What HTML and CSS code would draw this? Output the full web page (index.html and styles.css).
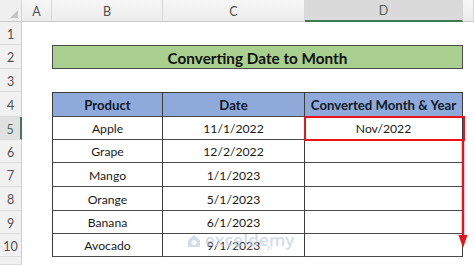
FILE: index.html
```html
<!DOCTYPE html>
<html>
<head>
<meta charset="utf-8">
<link rel="stylesheet" href="styles.css">
</head>
<body>
<div class="sheet">
  <div class="grid">
    <div class="corner"><span class="tri"></span></div>
    <div class="colhead">A</div>
    <div class="colhead">B</div>
    <div class="colhead">C</div>
    <div class="colhead sel">D</div>
    <div class="colhead"></div>

    <div class="rowhead">1</div>
    <div class="blank span5"></div>

    <div class="rowhead">2</div>
    <div class="blank"></div>
    <div class="banner">Converting Date to Month</div>
    <div class="blank"></div>

    <div class="rowhead">3</div>
    <div class="blank span5"></div>

    <div class="rowhead">4</div>
    <div class="blank"></div>
    <div class="th first">Product</div>
    <div class="th">Date</div>
    <div class="th">Converted Month &amp; Year</div>
    <div class="blank"></div>

    <div class="rowhead rsel">5</div>
    <div class="blank"></div>
    <div class="td first">Apple</div>
    <div class="td">11/1/2022</div>
    <div class="td">Nov/2022</div>
    <div class="blank"></div>

    <div class="rowhead">6</div>
    <div class="blank"></div>
    <div class="td first">Grape</div>
    <div class="td">12/2/2022</div>
    <div class="td"></div>
    <div class="blank"></div>

    <div class="rowhead">7</div>
    <div class="blank"></div>
    <div class="td first">Mango</div>
    <div class="td">1/1/2023</div>
    <div class="td"></div>
    <div class="blank"></div>

    <div class="rowhead">8</div>
    <div class="blank"></div>
    <div class="td first">Orange</div>
    <div class="td">5/1/2023</div>
    <div class="td"></div>
    <div class="blank"></div>

    <div class="rowhead">9</div>
    <div class="blank"></div>
    <div class="td first">Banana</div>
    <div class="td">6/1/2023</div>
    <div class="td"></div>
    <div class="blank"></div>

    <div class="rowhead">10</div>
    <div class="blank"></div>
    <div class="td first">Avocado</div>
    <div class="td">9/1/2023</div>
    <div class="td"></div>
    <div class="blank"></div>

    <div class="rowhead"></div>
    <div class="blank span5"></div>
  </div>

  <div class="watermark">
    <svg class="wm-logo" width="16" height="14" viewBox="0 0 16 14">
      <path d="M2 6 L8 1 L14 6 L14 13 L2 13 Z" fill="#c3cfe2"/>
      <circle cx="8" cy="8.5" r="2.6" fill="#ffffff" opacity="0.8"/>
    </svg>
    <div class="wm-text">
      <span class="wm-name">exceldemy</span>
      <span class="wm-sub">EXCEL · DATA · BI</span>
    </div>
  </div>

  <div class="redbox"></div>
  <svg class="arrow" width="14" height="112" viewBox="0 0 14 112">
    <line x1="7" y1="0" x2="7" y2="98" stroke="#e8131b" stroke-width="2.4"/>
    <polygon points="2.5,95 11.5,95 7,108" fill="#e8131b"/>
  </svg>
</div>
</body>
</html>
```

FILE: styles.css
```css
* { box-sizing: border-box; }
html, body { margin: 0; padding: 0; background: #ffffff; }
body { width: 474px; height: 265px; overflow: hidden; font-family: Lato, "Liberation Sans", sans-serif; }

.sheet { position: relative; width: 474px; height: 265px; overflow: hidden; }

.grid {
  display: grid;
  grid-template-columns: 22px 30px 111px 142px 158px 11px;
  grid-template-rows: 22px 23px 24px 23px 25px 23px 23px 24px 24px 23px 23px 8px;
}

.corner {
  position: relative;
  background: #efefef;
  border-right: 1px solid #d4d4d4;
  border-bottom: 1px solid #c8c8c8;
}
.tri {
  position: absolute;
  right: 3px;
  bottom: 3px;
  width: 0; height: 0;
  border-left: 8px solid transparent;
  border-bottom: 8px solid #c4c4c4;
}

.colhead {
  background: linear-gradient(#f6f6f6, #ececec);
  border-right: 1px solid #d8d8d8;
  border-bottom: 1px solid #c8c8c8;
  color: #505050;
  font-size: 12.5px;
  display: flex; align-items: center; justify-content: center;
  padding-top: 1px;
}
.colhead.sel {
  background: #dadada;
  border-bottom: 2px solid #3f7a57;
  color: #4f5f56;
}

.rowhead {
  background: #f1f1f1;
  border-right: 1px solid #cfcfcf;
  border-bottom: 1px solid #dcdcdc;
  color: #505050;
  font-size: 12.5px;
  display: flex; align-items: center; justify-content: center;
  padding-top: 2px;
}
.rowhead.rsel {
  background: #e0e0e0;
  border-right: 2px solid #3f7a57;
  color: #4a6e58;
}

.blank { background: #ffffff; }
.span5 { grid-column: span 5; }

.banner {
  grid-column: span 3;
  background: #a9d08e;
  border: 1px solid #4a4a4a;
  color: #111;
  font-weight: 700;
  font-size: 15.3px;
  display: flex; align-items: center; justify-content: center;
  padding-top: 1px;
}

.th, .td {
  border-right: 1px solid #3c3c3c;
  border-bottom: 1px solid #4a4a4a;
  display: flex; align-items: center; justify-content: center;
  color: #1a1a1a;
  padding-top: 1px;
}
.th {
  background: #8eaadb;
  border-top: 1px solid #3c3c3c;
  font-weight: 700;
  font-size: 13.2px;
  color: #101828;
}
.td { background: #ffffff; font-size: 12.2px; }
.first { border-left: 1px solid #3c3c3c; }

.redbox {
  position: absolute;
  left: 304px;
  top: 116px;
  width: 161px;
  height: 25px;
  border: 2.5px solid #e8131b;
}
.arrow {
  position: absolute;
  left: 456px;
  top: 140px;
}

.watermark {
  position: absolute;
  left: 186px;
  top: 231px;
  display: flex;
  align-items: flex-start;
  gap: 3px;
  opacity: 0.7;
}
.wm-logo { margin-top: 3px; }
.wm-text { display: flex; flex-direction: column; line-height: 1; }
.wm-name {
  font-family: "Open Sans", sans-serif;
  font-size: 17px;
  font-weight: 600;
  color: #c3cfe2;
  letter-spacing: 0.2px;
}
.wm-sub {
  font-size: 5px;
  color: #c8ceda;
  align-self: flex-end;
  margin-top: -2px;
  margin-right: 22px;
  letter-spacing: 0.5px;
}
```
